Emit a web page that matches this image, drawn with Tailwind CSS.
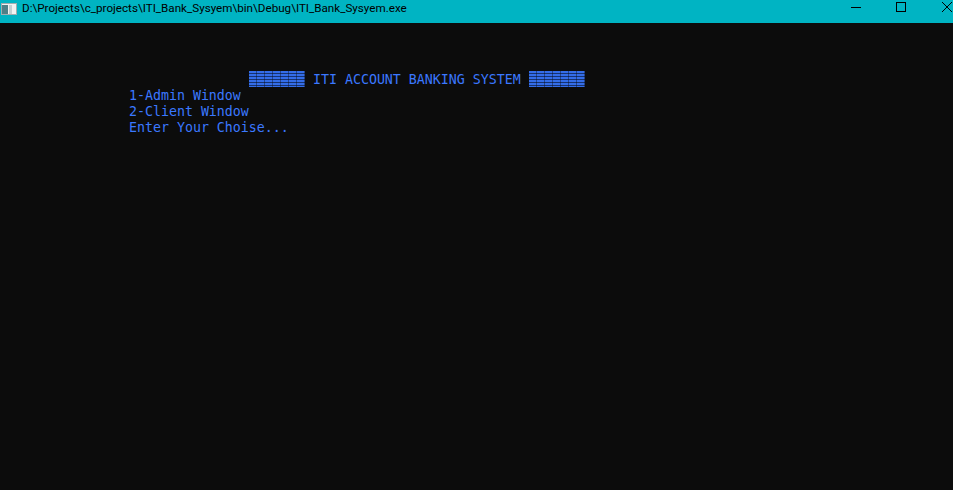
<!DOCTYPE html>
<html>
	<head>
		<meta charset="UTF-8" />
		<title>ITI_Bank_Sysyem</title>
		<script src="https://cdn.jsdelivr.net/npm/@tailwindcss/browser@4"></script>
	</head>

	<body class="w-[955px] h-[490px] overflow-hidden bg-white">
		<div class="w-[953px] h-[490px] flex flex-col bg-[#0c0c0c]">
			<!-- title bar -->
			<div class="h-[23px] shrink-0 flex items-center pb-[6px] bg-[#00b4c3] text-black">
				<svg class="ml-[1px] shrink-0" width="16" height="12" viewBox="0 0 16 12">
					<rect x="0.5" y="0.5" width="15" height="11" fill="#f2f2f2" stroke="#a3adb0" />
					<rect x="1" y="2" width="6" height="9" fill="#4f8088" />
					<rect x="8" y="2" width="3" height="9" fill="#c4d0d2" />
				</svg>
				<span class="ml-[5px] text-[11.65px] font-['Roboto',sans-serif] whitespace-nowrap">D:\Projects\c_projects\ITI_Bank_Sysyem\bin\Debug\ITI_Bank_Sysyem.exe</span>
				<div class="ml-auto self-start mt-[2px] flex items-start">
					<svg class="mr-[35px]" width="10" height="10" viewBox="0 0 10 10">
						<path d="M0 5.5H10" stroke="#000" fill="none" />
					</svg>
					<svg class="mr-[36px]" width="10" height="10" viewBox="0 0 10 10">
						<rect x="0.5" y="0.5" width="9" height="9" stroke="#000" fill="none" />
					</svg>
					<svg class="mr-[1px]" width="10" height="10" viewBox="0 0 10 10">
						<path d="M0 0L10 10M10 0L0 10" stroke="#000" fill="none" />
					</svg>
				</div>
			</div>

			<!-- console -->
			<div class="pt-[48px] pl-[1px] text-[13.28px] leading-[18px] text-[#3b78ff] font-['DejaVu_Sans_Mono',monospace]">
				<div class="flex items-start h-[16px] pl-[248px]">
					<span class="w-[56px] h-[16px] bg-[repeating-linear-gradient(to_right,transparent_0,transparent_7px,#0c0c0c66_7px,#0c0c0c66_8px),repeating-linear-gradient(to_bottom,#346de8_0,#346de8_2px,#17336f_2px,#17336f_3px)]"></span>
					<span class="whitespace-pre"> ITI ACCOUNT BANKING SYSTEM </span>
					<span class="w-[56px] h-[16px] bg-[repeating-linear-gradient(to_right,transparent_0,transparent_7px,#0c0c0c66_7px,#0c0c0c66_8px),repeating-linear-gradient(to_bottom,#346de8_0,#346de8_2px,#17336f_2px,#17336f_3px)]"></span>
				</div>
				<div class="h-[16px] pl-[128px]">1-Admin Window</div>
				<div class="h-[16px] pl-[128px]">2-Client Window</div>
				<div class="h-[16px] pl-[128px]">Enter Your Choise...</div>
			</div>
		</div>
	</body>
</html>
